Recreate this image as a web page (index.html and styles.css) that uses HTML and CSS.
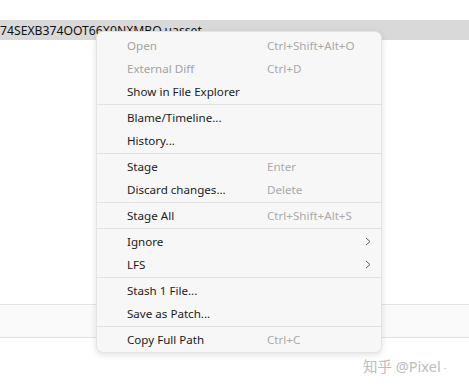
FILE: index.html
```html
<!DOCTYPE html>
<html>
<head>
    <meta charset="UTF-8">
    <title>Context menu</title>
    <link rel="stylesheet" href="styles.css">
</head>
<body>
    <div class="file-bar">
        <span class="file-name">74SEXB374OOT66X0NXMBO.uasset</span>
    </div>

    <div class="list-row"></div>

    <div class="menu">
        <div class="item disabled"><span class="label">Open</span><span class="shortcut">Ctrl+Shift+Alt+O</span></div>
        <div class="item disabled"><span class="label">External Diff</span><span class="shortcut">Ctrl+D</span></div>
        <div class="item"><span class="label">Show in File Explorer</span></div>
        <div class="separator"></div>
        <div class="item"><span class="label">Blame/Timeline...</span></div>
        <div class="item"><span class="label">History...</span></div>
        <div class="separator"></div>
        <div class="item"><span class="label">Stage</span><span class="shortcut">Enter</span></div>
        <div class="item"><span class="label">Discard changes...</span><span class="shortcut">Delete</span></div>
        <div class="separator"></div>
        <div class="item"><span class="label">Stage All</span><span class="shortcut">Ctrl+Shift+Alt+S</span></div>
        <div class="separator"></div>
        <div class="item"><span class="label">Ignore</span>
            <svg class="chevron" viewBox="0 0 8 10" fill="none" stroke="currentColor" stroke-width="1"><path d="M2 1.5l4 3.5-4 3.5"></path></svg>
        </div>
        <div class="item"><span class="label">LFS</span>
            <svg class="chevron" viewBox="0 0 8 10" fill="none" stroke="currentColor" stroke-width="1"><path d="M2 1.5l4 3.5-4 3.5"></path></svg>
        </div>
        <div class="separator"></div>
        <div class="item"><span class="label">Stash 1 File...</span></div>
        <div class="item"><span class="label">Save as Patch...</span></div>
        <div class="separator"></div>
        <div class="item"><span class="label">Copy Full Path</span><span class="shortcut">Ctrl+C</span></div>
    </div>

    <div class="watermark">知乎 @Pixel<span class="dot">·</span></div>
</body>
</html>
```

FILE: styles.css
```css
body {
    margin: 0;
    width: 469px;
    height: 386px;
    overflow: hidden;
    background-color: #ffffff;
    font-family: "Noto Sans", "Open Sans", sans-serif;
    font-size: 11.6px;
    color: #1b1b1b;
    position: relative;
}

.file-bar {
    margin-top: 20px;
    height: 20px;
    display: flex;
    align-items: center;
    background-color: #d9d9d9;
}

.file-name {
    font-size: 12.2px;
    color: #111;
    white-space: nowrap;
}

.list-row {
    margin-top: 264px;
    height: 32px;
    border-top: 1px solid #e3e3e3;
    border-bottom: 1px solid #e3e3e3;
    background-color: #fafafa;
}

.menu {
    position: absolute;
    left: 96px;
    top: 31px;
    width: 284px;
    padding: 2px 0 1px;
    background-color: #f7f7f7;
    border: 1px solid #e4e4e4;
    border-radius: 7px;
    box-shadow: 0 2px 6px rgba(0, 0, 0, 0.12);
}

.item {
    display: flex;
    align-items: center;
    height: 23px;
    padding-left: 30px;
    padding-right: 9px;
}

.label {
    width: 140px;
}

.shortcut {
    color: #a9a9a9;
}

.item.disabled .label {
    color: #a3a3a3;
}

.chevron {
    width: 8px;
    height: 11px;
    margin-left: auto;
    color: #606060;
}

.separator {
    height: 1px;
    margin: 1px 0;
    background-color: #e2e2e2;
}

.watermark {
    position: absolute;
    left: 363px;
    top: 355px;
    font-family: "Noto Sans", "Noto Sans CJK SC", sans-serif;
    font-size: 14.5px;
    color: #bdbdbd;
    white-space: nowrap;
}

.dot {
    margin-left: 3px;
    font-size: 10px;
}
```
